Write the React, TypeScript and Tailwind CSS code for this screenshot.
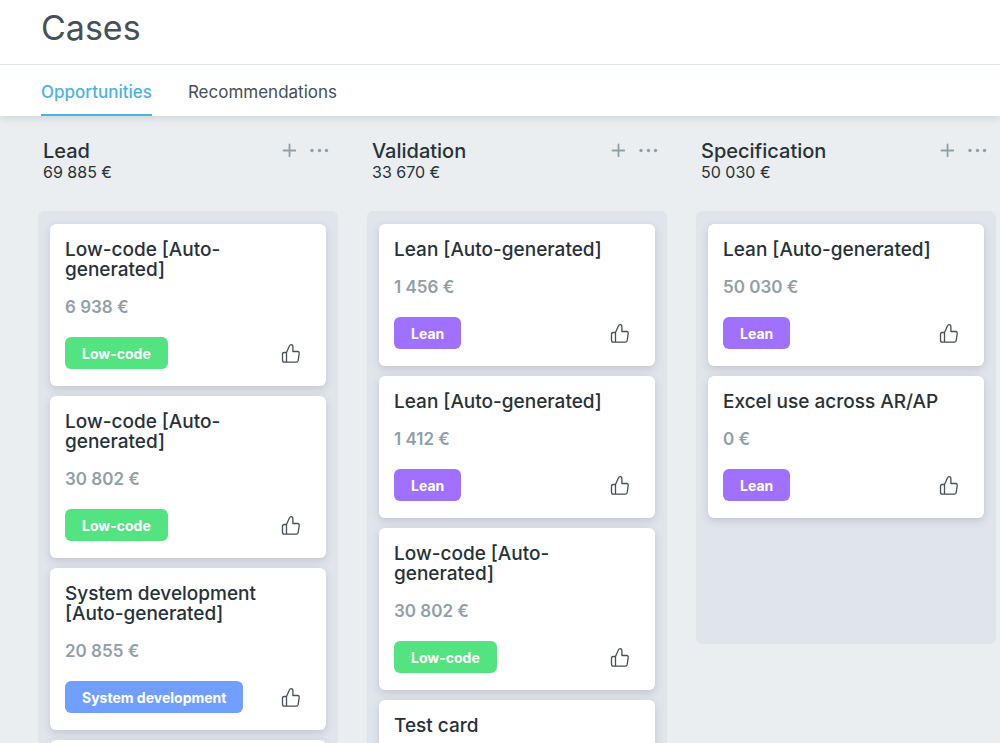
import React, { useState } from 'react';

type Tag = 'Low-code' | 'Lean' | 'System development';

interface Case {
  title: string;
  amount: string;
  tag: Tag;
}

interface Column {
  name: string;
  total: string;
  cases: Case[];
}

const TAG_COLORS: Record<Tag, string> = {
  'Low-code': 'bg-[#54e381]',
  Lean: 'bg-[#a070ff]',
  'System development': 'bg-[#719fff]',
};

const TABS = ['Opportunities', 'Recommendations'];

const COLUMNS: Column[] = [
  {
    name: 'Lead',
    total: '69 885 €',
    cases: [
      { title: 'Low-code [Auto-generated]', amount: '6 938 €', tag: 'Low-code' },
      { title: 'Low-code [Auto-generated]', amount: '30 802 €', tag: 'Low-code' },
      { title: 'System development [Auto-generated]', amount: '20 855 €', tag: 'System development' },
      { title: 'Lean [Auto-generated]', amount: '11 290 €', tag: 'Lean' },
    ],
  },
  {
    name: 'Validation',
    total: '33 670 €',
    cases: [
      { title: 'Lean [Auto-generated]', amount: '1 456 €', tag: 'Lean' },
      { title: 'Lean [Auto-generated]', amount: '1 412 €', tag: 'Lean' },
      { title: 'Low-code [Auto-generated]', amount: '30 802 €', tag: 'Low-code' },
      { title: 'Test card', amount: '0 €', tag: 'Lean' },
    ],
  },
  {
    name: 'Specification',
    total: '50 030 €',
    cases: [
      { title: 'Lean [Auto-generated]', amount: '50 030 €', tag: 'Lean' },
      { title: 'Excel use across AR/AP', amount: '0 €', tag: 'Lean' },
    ],
  },
];

const App: React.FC = () => {
  const [activeTab, setActiveTab] = useState(TABS[0]);

  return (
    <div className="h-screen flex flex-col overflow-hidden bg-[#eaeef1] font-['Inter',sans-serif] text-[#263238]">
      {/* Header */}
      <header className="relative z-10 shrink-0 bg-white shadow-[0_2px_8px_rgba(38,50,56,0.14)]">
        <div className="h-[65px] px-[41px] pt-2 border-b border-[#e0e4eb]">
          <h1 className="text-[34px] leading-10 text-[#455057]">Cases</h1>
        </div>
        <nav className="flex gap-9 h-[51px] px-[41px]">
          {TABS.map((tab) => (
            <button
              key={tab}
              onClick={() => setActiveTab(tab)}
              className={
                tab === activeTab
                  ? 'pt-[7px] border-b-2 border-[#4db2e1] text-[17px] font-medium text-[#4db2e1]'
                  : 'pt-[7px] border-b-2 border-transparent text-[17px] text-[#455057]'
              }
            >
              {tab}
            </button>
          ))}
        </nav>
      </header>

      {/* Board */}
      <main className="flex flex-1 items-start gap-[29px] pl-[38px] pt-6">
        {COLUMNS.map((column) => (
          <BoardColumn key={column.name} column={column} />
        ))}
      </main>
    </div>
  );
};

const BoardColumn = ({ column }: { column: Column }) => (
  <section className="w-[300px] shrink-0">
    <div className="flex justify-between h-[71px] pl-[5px] pr-2">
      <div>
        <h2 className="text-xl leading-[22px] font-medium">{column.name}</h2>
        <p className="text-base leading-5">{column.total}</p>
      </div>
      <div className="flex gap-3 h-5 items-center text-[#90a0a9]">
        <button aria-label={`Add case to ${column.name}`}>
          <PlusIcon />
        </button>
        <button aria-label={`${column.name} options`}>
          <DotsIcon />
        </button>
      </div>
    </div>
    <div className="flex flex-col gap-[10px] min-h-[433px] px-3 py-[13px] rounded-md bg-[#e0e5ec]">
      {column.cases.map((item, i) => (
        <CaseCard key={i} item={item} />
      ))}
    </div>
  </section>
);

const CaseCard = ({ item }: { item: Case }) => (
  <article className="px-[15px] pt-4 pb-[17px] rounded-md bg-white shadow-[0_3px_8px_rgba(38,50,56,0.16)]">
    <h3 className="text-[19px] leading-5 font-medium">{item.title}</h3>
    <p className="mt-[15px] text-[17px] leading-6 font-semibold text-[#90a0a9]">{item.amount}</p>
    <div className="flex items-center justify-between mt-[18px] pr-[10px]">
      <span className={`px-[17px] pt-px h-8 rounded-md text-sm leading-8 font-bold text-white ${TAG_COLORS[item.tag]}`}>
        {item.tag}
      </span>
      <button aria-label={`Like ${item.title}`} className="text-[#455057]">
        <ThumbIcon />
      </button>
    </div>
  </article>
);

const PlusIcon = () => (
  <svg width="14" height="14" viewBox="0 0 14 14" fill="none" stroke="currentColor" strokeWidth="1.8" strokeLinecap="round">
    <path d="M7.5 1.5v12M1.5 7.500h12" />
  </svg>
);

const DotsIcon = () => (
  <svg width="22" height="14" viewBox="0 0 22 14" fill="currentColor">
    <circle cx="4" cy="7.500" r="1.7" />
    <circle cx="11.500" cy="7.500" r="1.7" />
    <circle cx="18.500" cy="7.500" r="1.7" />
  </svg>
);

const ThumbIcon = () => (
  <svg width="20" height="20" viewBox="0 0 20 20" fill="none" stroke="currentColor" strokeWidth="1.3" strokeLinejoin="round" strokeLinecap="round">
    <path d="M5.500 9.500H3.200C2 9.500 1.500 10.100 1.500 11.200v5.700c0 1.500.6 2.200 2 2.200h11.700c1.200 0 1.800-.6 2-1.700l1-7c.1-1.200-.5-1.900-1.600-1.900h-4.700V4C11.900 2.600 11.300 1.700 10.200 1.700S8.700 2.300 8.300 3.200L5.500 9.500v9.600" />
  </svg>
);

export default App;
